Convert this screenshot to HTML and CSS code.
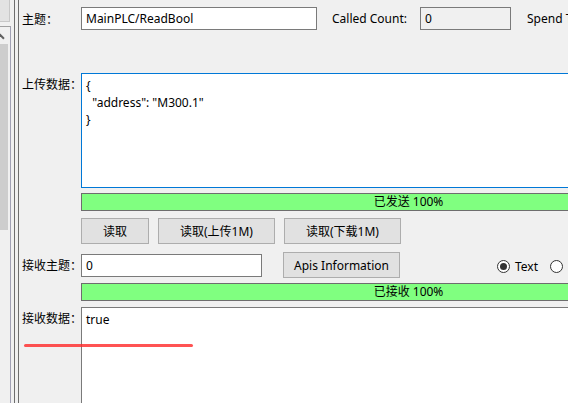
FILE: index.html
```html
<!DOCTYPE html>
<html lang="zh-CN">

<head>
    <meta charset="UTF-8">
    <meta name="viewport" content="width=device-width, initial-scale=1.0">
    <title>MQTT Rpc Client</title>
    <link rel="stylesheet" href="styles.css">
</head>

<body>
    <div class="window">
        <div class="sidebar">
            <div class="side-top"></div>
            <div class="side-scroll">
                <div class="scroll-arrow"></div>
                <div class="scroll-thumb"></div>
            </div>
        </div>
        <div class="splitter"></div>
        <div class="splitter"></div>

        <div class="panel">
            <div class="row row-topic">
                <div class="label">主题：</div>
                <div class="field topic-input">MainPLC/ReadBool</div>
                <div class="inline-label">Called Count:</div>
                <div class="field readonly count-input">0</div>
                <div class="inline-label spend">Spend Time:</div>
            </div>

            <div class="row row-send">
                <div class="label label-top">上传数据：</div>
                <div class="textbox focused">
                    <div>{</div>
                    <div>&nbsp;&nbsp;"address": "M300.1"</div>
                    <div>}</div>
                </div>
            </div>

            <div class="progress progress-send">已发送 100%</div>

            <div class="buttons">
                <button class="btn btn-small">读取</button>
                <button class="btn">读取(上传1M)</button>
                <button class="btn">读取(下载1M)</button>
            </div>

            <div class="row row-recv-topic">
                <div class="label">接收主题：</div>
                <div class="field recv-input">0</div>
                <button class="btn btn-apis">Apis Information</button>
                <div class="radios">
                    <span class="radio checked"></span>
                    <span class="radio-text">Text</span>
                    <span class="radio"></span>
                </div>
            </div>

            <div class="progress progress-recv">已接收 100%</div>

            <div class="row row-recv">
                <div class="label label-top">接收数据：</div>
                <div class="textbox recv-box">
                    <div>true</div>
                </div>
            </div>
        </div>

        <div class="annotation"></div>
    </div>
</body>

</html>
```

FILE: styles.css
```css
body {
    margin: 0;
    background-color: #f0f0f0;
    font-family: "Noto Sans", "Noto Sans CJK SC", sans-serif;
    font-size: 12px;
    color: #000;
    overflow: hidden;
}

.window {
    position: relative;
    display: flex;
    height: 403px;
    overflow: hidden;
}

/* left tree panel, mostly cut off */
.sidebar {
    width: 11px;
    flex-shrink: 0;
    display: flex;
    flex-direction: column;
}

.side-top {
    height: 21px;
    width: 9px;
    background-color: #e3e3e3;
    border-right: 1px solid #c8c8c8;
    border-bottom: 1px solid #c8c8c8;
}

.side-scroll {
    margin-top: 4px;
    flex: 1;
    border-top: 1px solid #a0a0a0;
    border-right: 1px solid #a0a0b4;
    display: flex;
    flex-direction: column;
    overflow: hidden;
}

.scroll-arrow {
    height: 17px;
    position: relative;
}

.scroll-arrow::before {
    content: "";
    position: absolute;
    left: -5px;
    top: 7px;
    width: 6px;
    height: 6px;
    border-top: 2px solid #606060;
    border-left: 2px solid #606060;
    transform: rotate(45deg);
}

.scroll-thumb {
    height: 186px;
    width: 8px;
    background-color: #cdcdcd;
}

.splitter {
    width: 1px;
    margin-left: 3px;
    flex-shrink: 0;
    background-color: #6d6d6d;
}

.panel {
    padding-left: 3px;
    padding-top: 7px;
    flex-shrink: 0;
    width: 730px;
}

.row {
    display: flex;
    align-items: center;
}

.label {
    width: 59px;
    flex-shrink: 0;
    white-space: nowrap;
}

.label-top {
    align-self: flex-start;
    padding-top: 3px;
    line-height: 17px;
}

.field {
    box-sizing: border-box;
    height: 23px;
    line-height: 21px;
    padding-left: 4px;
    background-color: #fff;
    border: 1px solid #7a7a7a;
    white-space: nowrap;
}

.readonly {
    background-color: #f0f0f0;
}

.topic-input {
    width: 236px;
}

.inline-label {
    margin-left: 15px;
    width: 88px;
    white-space: nowrap;
}

.spend {
    margin-left: 16px;
}

.count-input {
    width: 91px;
}

.row-send {
    margin-top: 43px;
    align-items: flex-start;
}

.textbox {
    box-sizing: border-box;
    width: 654px;
    height: 115px;
    padding: 3px 4px;
    line-height: 17px;
    background-color: #fff;
    border: 1px solid #7a7a7a;
    white-space: nowrap;
}

.focused {
    border-color: #0078d7;
}

.progress {
    box-sizing: border-box;
    margin-left: 59px;
    width: 654px;
    height: 18px;
    line-height: 16px;
    text-align: center;
    background-color: #80ff80;
    border: 1px solid #6d6d6d;
    border-right: none;
}

.progress-send {
    margin-top: 5px;
}

.buttons {
    display: flex;
    gap: 9px;
    margin-top: 7px;
    margin-left: 59px;
}

.btn {
    box-sizing: border-box;
    width: 117px;
    height: 26px;
    padding: 0;
    font-family: inherit;
    font-size: 12px;
    color: #000;
    background-color: #e1e1e1;
    border: 1px solid #adadad;
}

.btn-small {
    width: 68px;
}

.row-recv-topic {
    margin-top: 8px;
    height: 26px;
}

.recv-input {
    width: 181px;
    height: 23px;
}

.btn-apis {
    margin-left: 21px;
}

.radios {
    display: flex;
    align-items: center;
    margin-left: 97px;
    margin-top: 3px;
}

.radio {
    box-sizing: border-box;
    width: 13px;
    height: 13px;
    border-radius: 50%;
    border: 1px solid #333;
    background-color: #fff;
    position: relative;
}

.radio.checked::after {
    content: "";
    position: absolute;
    left: 2px;
    top: 2px;
    width: 7px;
    height: 7px;
    border-radius: 50%;
    background-color: #333;
}

.radio-text {
    margin-left: 5px;
    margin-right: 12px;
}

.progress-recv {
    margin-top: 5px;
}

.row-recv {
    margin-top: 6px;
    align-items: flex-start;
}

.recv-box {
    height: 200px;
    border-right: none;
}

/* red marker drawn over the screenshot */
.annotation {
    position: absolute;
    left: 24px;
    top: 344px;
    width: 169px;
    height: 3px;
    border-radius: 2px;
    background-color: rgba(255, 40, 40, 0.8);
}
```
